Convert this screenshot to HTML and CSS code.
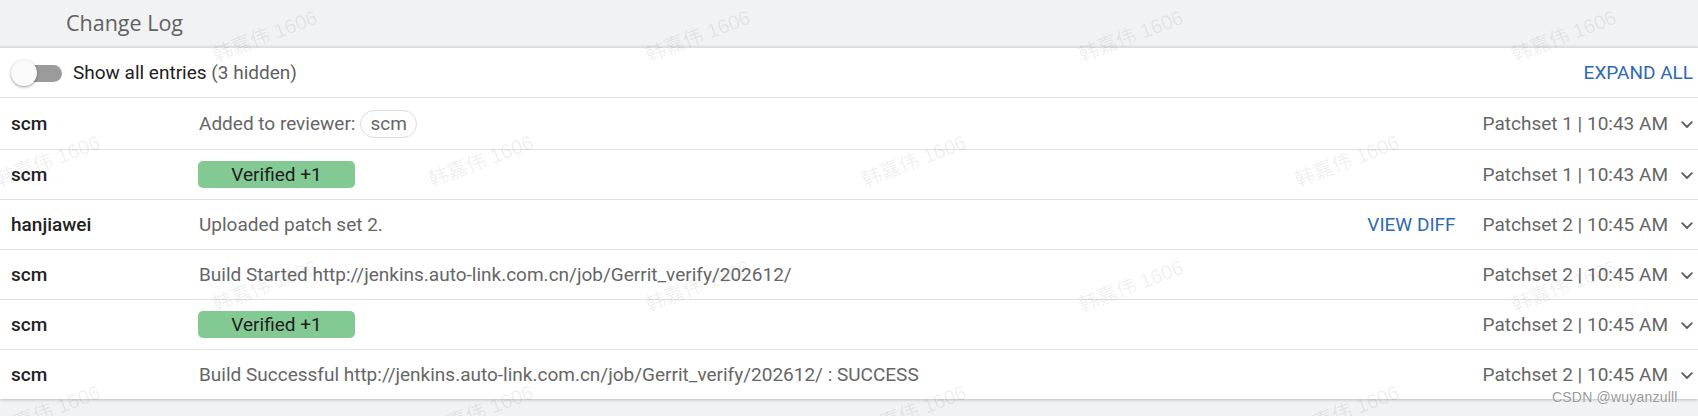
FILE: index.html
```html
<!DOCTYPE html>
<html lang="en">
<head>
<meta charset="utf-8">
<title>Change Log</title>
<link rel="stylesheet" href="styles.css">
</head>
<body>
<div class="page">
  <header class="header"><h2 class="title">Change Log</h2></header>
  <section class="card">
    <div class="toolbar">
      <div class="toggle-wrap">
        <span class="toggle"><span class="track"></span><span class="knob"></span></span>
        <span class="show-label">Show all entries <span class="hidden-count">(3 hidden)</span></span>
      </div>
      <a class="link-btn expand">EXPAND ALL</a>
    </div>

    <div class="entry entry-tall">
      <div class="name">scm</div>
      <div class="msg">Added to reviewer: <span class="acct-chip">scm</span></div>
      <div class="diff"></div>
      <div class="meta">Patchset 1 | 10:43 AM</div>
      <svg class="chev" viewBox="0 0 12 8" width="12" height="8"><path d="M1.2 1.2 L6 6 L10.8 1.2"/></svg>
    </div>

    <div class="entry">
      <div class="name">scm</div>
      <div class="msg"><span class="vote">Verified +1</span></div>
      <div class="diff"></div>
      <div class="meta">Patchset 1 | 10:43 AM</div>
      <svg class="chev" viewBox="0 0 12 8" width="12" height="8"><path d="M1.2 1.2 L6 6 L10.8 1.2"/></svg>
    </div>

    <div class="entry">
      <div class="name">hanjiawei</div>
      <div class="msg">Uploaded patch set 2.</div>
      <div class="diff"><a class="link-btn">VIEW DIFF</a></div>
      <div class="meta">Patchset 2 | 10:45 AM</div>
      <svg class="chev" viewBox="0 0 12 8" width="12" height="8"><path d="M1.2 1.2 L6 6 L10.8 1.2"/></svg>
    </div>

    <div class="entry">
      <div class="name">scm</div>
      <div class="msg">Build Started http://jenkins.auto-link.com.cn/job/Gerrit_verify/202612/</div>
      <div class="diff"></div>
      <div class="meta">Patchset 2 | 10:45 AM</div>
      <svg class="chev" viewBox="0 0 12 8" width="12" height="8"><path d="M1.2 1.2 L6 6 L10.8 1.2"/></svg>
    </div>

    <div class="entry">
      <div class="name">scm</div>
      <div class="msg"><span class="vote">Verified +1</span></div>
      <div class="diff"></div>
      <div class="meta">Patchset 2 | 10:45 AM</div>
      <svg class="chev" viewBox="0 0 12 8" width="12" height="8"><path d="M1.2 1.2 L6 6 L10.8 1.2"/></svg>
    </div>

    <div class="entry">
      <div class="name">scm</div>
      <div class="msg">Build Successful http://jenkins.auto-link.com.cn/job/Gerrit_verify/202612/ : SUCCESS</div>
      <div class="diff"></div>
      <div class="meta">Patchset 2 | 10:45 AM</div>
      <svg class="chev" viewBox="0 0 12 8" width="12" height="8"><path d="M1.2 1.2 L6 6 L10.8 1.2"/></svg>
    </div>
  </section>

  <div class="watermarks" aria-hidden="true">
    <span class="wm wm-a1">韩嘉伟 1606</span>
    <span class="wm wm-a2">韩嘉伟 1606</span>
    <span class="wm wm-a3">韩嘉伟 1606</span>
    <span class="wm wm-a4">韩嘉伟 1606</span>
    <span class="wm wm-b1">韩嘉伟 1606</span>
    <span class="wm wm-b2">韩嘉伟 1606</span>
    <span class="wm wm-b3">韩嘉伟 1606</span>
    <span class="wm wm-b4">韩嘉伟 1606</span>
    <span class="wm wm-c1">韩嘉伟 1606</span>
    <span class="wm wm-c2">韩嘉伟 1606</span>
    <span class="wm wm-c3">韩嘉伟 1606</span>
    <span class="wm wm-c4">韩嘉伟 1606</span>
    <span class="wm wm-d1">韩嘉伟 1606</span>
    <span class="wm wm-d2">韩嘉伟 1606</span>
    <span class="wm wm-d3">韩嘉伟 1606</span>
    <span class="wm wm-d4">韩嘉伟 1606</span>
  </div>
  <div class="csdn">CSDN @wuyanzulll</div>
</div>
</body>
</html>
```

FILE: styles.css
```css
* { box-sizing: border-box; }

html, body {
  margin: 0;
  padding: 0;
  background: #f1f2f3;
  font-family: Roboto, "Liberation Sans", Arial, sans-serif;
  font-size: 19px;
  color: #212121;
  overflow: hidden;
}

.page {
  position: relative;
  width: 1698px;
  height: 416px;
  overflow: hidden;
}

.header {
  height: 47px;
  display: flex;
  align-items: center;
  padding-left: 66px;
}

.title {
  margin: 0;
  font-family: "Open Sans", "Noto Sans", sans-serif;
  font-weight: 400;
  font-size: 21.5px;
  color: #616161;
  line-height: 1;
  padding-bottom: 1px;
}

.card {
  background: #fff;
  border-top: 1px solid #dcdcdc;
  box-shadow: 0 1px 3px rgba(0, 0, 0, 0.22), 0 -1px 2px rgba(0, 0, 0, 0.05);
}

.toolbar {
  height: 50px;
  display: flex;
  align-items: center;
  justify-content: space-between;
  padding: 0 5px 0 11px;
  border-bottom: 1px solid #e0e0e0;
}

.toggle-wrap {
  display: flex;
  align-items: center;
  gap: 11px;
}

.toggle {
  position: relative;
  width: 51px;
  height: 26px;
  display: inline-block;
}

.track {
  position: absolute;
  left: 4px;
  top: 5px;
  width: 47px;
  height: 17px;
  border-radius: 9px;
  background: #9b9b9b;
}

.knob {
  position: absolute;
  left: 0;
  top: 0;
  width: 26px;
  height: 26px;
  border-radius: 50%;
  background: #fafafa;
  box-shadow: 0 1px 3px rgba(0, 0, 0, 0.4);
}

.show-label {
  color: #212121;
}

.hidden-count {
  color: #5f5f5f;
}

.link-btn {
  color: #2f69b3;
  letter-spacing: 0;
  text-transform: uppercase;
  cursor: pointer;
}

.entry {
  display: grid;
  grid-template-columns: 188px 1fr auto auto 12px;
  align-items: center;
  height: 50px;
  padding: 0 5px 0 11px;
  border-bottom: 1px solid #e0e0e0;
}

.entry-tall {
  height: 52px;
}

.entry:last-child {
  border-bottom: none;
  height: 49px;
}

.name {
  font-weight: 500;
  color: #222;
}

.msg {
  color: #666;
  display: flex;
  align-items: center;
  white-space: nowrap;
}

.acct-chip {
  display: inline-flex;
  align-items: center;
  height: 28px;
  padding: 0 9px;
  margin-left: 5px;
  border: 1px solid #dedede;
  border-radius: 14px;
  color: #666;
}

.vote {
  display: inline-flex;
  align-items: center;
  justify-content: center;
  width: 157px;
  height: 27px;
  border-radius: 5px;
  background: #82c994;
  color: #1e1e1e;
  margin-left: -1px;
}

.diff {
  padding-right: 27px;
}

.meta {
  color: #666;
  padding-right: 13px;
}

.chev {
  fill: none;
  stroke: #616161;
  stroke-width: 1.9;
  stroke-linecap: round;
  stroke-linejoin: round;
  margin-top: 2px;
}

/* watermark overlay */
.watermarks {
  position: absolute;
  inset: 0;
  pointer-events: none;
}

.wm {
  position: absolute;
  font-family: "Liberation Sans", "Noto Sans CJK SC", sans-serif;
  font-size: 20px;
  line-height: 20px;
  color: rgba(0, 0, 0, 0.07);
  white-space: nowrap;
  transform: rotate(-21deg);
  transform-origin: 0 100%;
}

.wm-a1 { left: 217px; top: 45px; }
.wm-a2 { left: 650px; top: 45px; }
.wm-a3 { left: 1083px; top: 45px; }
.wm-a4 { left: 1516px; top: 45px; }
.wm-b1 { left: 0px; top: 170px; }
.wm-b2 { left: 433px; top: 170px; }
.wm-b3 { left: 866px; top: 170px; }
.wm-b4 { left: 1299px; top: 170px; }
.wm-c1 { left: 217px; top: 295px; }
.wm-c2 { left: 650px; top: 295px; }
.wm-c3 { left: 1083px; top: 295px; }
.wm-c4 { left: 1516px; top: 295px; }
.wm-d1 { left: 0px; top: 420px; }
.wm-d2 { left: 433px; top: 420px; }
.wm-d3 { left: 866px; top: 420px; }
.wm-d4 { left: 1299px; top: 420px; }

.csdn {
  position: absolute;
  left: 1552px;
  top: 389px;
  font-family: "Liberation Sans", Arial, sans-serif;
  font-size: 14px;
  color: #9a9a9a;
  text-shadow: 0 0 2px #fff, 0 0 2px #fff;
  letter-spacing: 0.2px;
}
```
